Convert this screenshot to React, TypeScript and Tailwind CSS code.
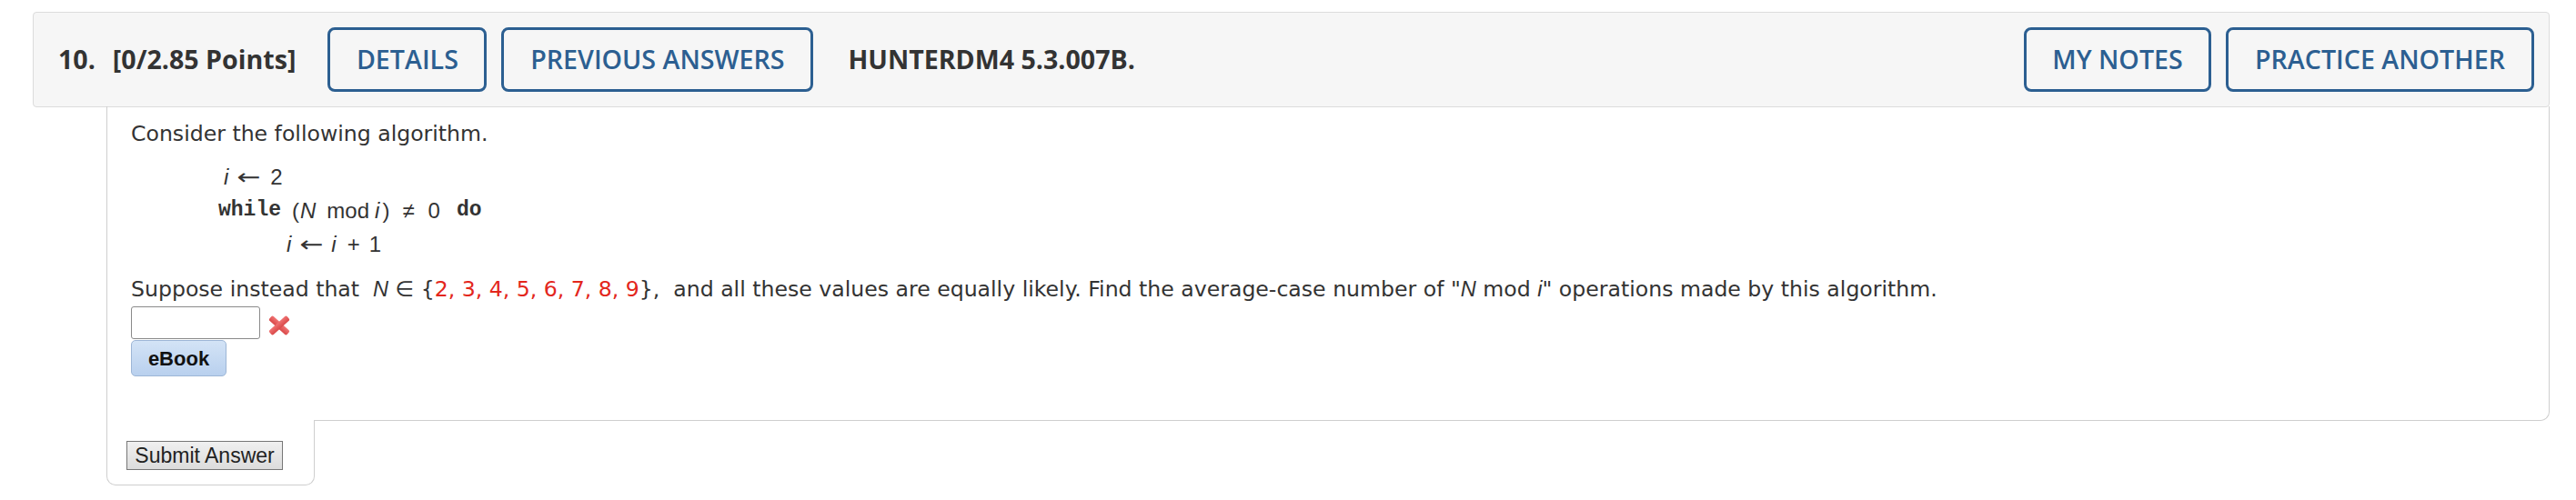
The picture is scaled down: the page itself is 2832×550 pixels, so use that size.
import React from "react";

const OPEN = { fontFamily: '"Open Sans", "Noto Sans", sans-serif' };
const BODY = { fontFamily: '"DejaVu Sans", Verdana, sans-serif' };
const ARIAL = { fontFamily: '"Liberation Sans", Arial, sans-serif' };
const MONO = { fontFamily: '"Liberation Mono", "Courier New", monospace' };

function HeaderButton({ label, w }: { label: string; w: string }) {
  return (
    <button
      className={`h-[71px] ${w} rounded-[8px] border-[3px] border-[#2c5f91] bg-transparent text-[28.6px] font-semibold text-[#2c5f91] flex items-center justify-center`}
      style={OPEN}
    >
      {label}
    </button>
  );
}

function Arrow() {
  return (
    <span className="inline-block w-[27px] text-center text-[24px] scale-x-[1.3]" style={BODY}>
      ←
    </span>
  );
}

function RedX() {
  return (
    <svg width="24" height="22" viewBox="0 0 24 22" className="ml-[9px] mt-[10px]">
      <defs>
        <linearGradient id="rx" x1="0" y1="0" x2="0" y2="1">
          <stop offset="0" stopColor="#f07474" />
          <stop offset="1" stopColor="#d94848" />
        </linearGradient>
      </defs>
      <g transform="translate(12 11)">
        <rect x="-13" y="-3.3" width="26" height="6.6" rx="2" fill="url(#rx)" transform="rotate(42)" />
        <rect x="-13" y="-3.3" width="26" height="6.6" rx="2" fill="url(#rx)" transform="rotate(-42)" />
      </g>
    </svg>
  );
}

export default function App() {
  return (
    <div className="w-[2832px] h-[550px] bg-white pt-[13px] pl-[36px] pr-[29px]">
      {/* Header */}
      <div className="h-[105px] rounded-[4px] border border-[#dcdcdc] bg-[#f6f6f6] pl-[27px] pr-[16px] flex items-center">
        <span className="text-[28.6px] font-bold text-[#333]" style={OPEN}>
          10.
        </span>
        <span className="ml-[19px] text-[28.6px] font-bold text-[#333]" style={OPEN}>
          [0/2.85 Points]
        </span>
        <div className="ml-[35px] flex gap-[16px]">
          <HeaderButton label="DETAILS" w="w-[175px]" />
          <HeaderButton label="PREVIOUS ANSWERS" w="w-[343px]" />
        </div>
        <span className="ml-[38px] text-[28.6px] font-bold text-[#333]" style={OPEN}>
          HUNTERDM4 5.3.007B.
        </span>
        <div className="ml-auto flex gap-[16px]">
          <HeaderButton label="MY NOTES" w="w-[206px]" />
          <HeaderButton label="PRACTICE ANOTHER" w="w-[339px]" />
        </div>
      </div>

      {/* Question body */}
      <div className="ml-[81px] -mt-px">
        <div className="border-x border-b border-[#cfcfcf] rounded-br-[10px] pl-[26px] pt-[15px] pb-[48px] text-[#333]">
          <div className="h-[30px] leading-[30px] text-[23.6px]" style={BODY}>
            Consider the following algorithm.
          </div>
          <div className="mt-[14px] text-[24px]" style={ARIAL}>
            <div className="h-[37px] pl-[102px] flex items-center">
              <i>i</i>
              <span className="ml-[9px]"><Arrow /></span>
              <span className="ml-[10px]">2</span>
            </div>
            <div className="h-[37px] pl-[96px] flex items-center">
              <span className="font-bold text-[23px]" style={MONO}>while</span>
              <span className="ml-[12px]">(</span>
              <i className="ml-px">N</i>
              <span className="ml-[12px]">mod</span>
              <i className="ml-[6px]">i</i>
              <span className="ml-[3px]">)</span>
              <span className="ml-[14px]">≠</span>
              <span className="ml-[15px]">0</span>
              <span className="ml-[18px] font-bold text-[23px]" style={MONO}>do</span>
            </div>
            <div className="h-[37px] pl-[171px] flex items-center">
              <i>i</i>
              <span className="ml-[9px]"><Arrow /></span>
              <i className="ml-[8px]">i</i>
              <span className="ml-[12px]">+</span>
              <span className="ml-[10px]">1</span>
            </div>
          </div>
          <div className="mt-[16px] h-[30px] leading-[30px] text-[23.6px] whitespace-pre" style={BODY}>
            {"Suppose instead that  "}
            <i style={ARIAL}>N</i>
            {" ∈ {"}
            <span className="text-[#e3261c]">2, 3, 4, 5, 6, 7, 8, 9</span>
            {"},  and all these values are equally likely. Find the average-case number of \""}
            <i style={ARIAL}>N</i>
            {" mod "}
            <i style={ARIAL}>i</i>
            {"\" operations made by this algorithm."}
          </div>
          <div className="mt-[4px] flex items-start">
            <div className="h-[36px] w-[142px] rounded-[3px] border border-[#8a8a8a] bg-white" />
            <RedX />
          </div>
          <button
            className="mt-px h-[40px] w-[105px] rounded-[5px] border border-[#9db6d6] bg-gradient-to-b from-[#d3e3f6] to-[#b9d0ee] text-[22px] font-bold text-[#111] flex items-center justify-center"
            style={ARIAL}
          >
            eBook
          </button>
        </div>
        <div className="-mt-px w-[229px] h-[72px] border-x border-b border-[#cfcfcf] rounded-b-[10px] bg-white pl-[21px] pt-[23px]">
          <button
            className="h-[32px] w-[172px] border border-[#777] bg-gradient-to-b from-[#f0f0f0] to-[#dcdcdc] text-[23px] text-[#222] flex items-center justify-center"
            style={ARIAL}
          >
            Submit Answer
          </button>
        </div>
      </div>
    </div>
  );
}
